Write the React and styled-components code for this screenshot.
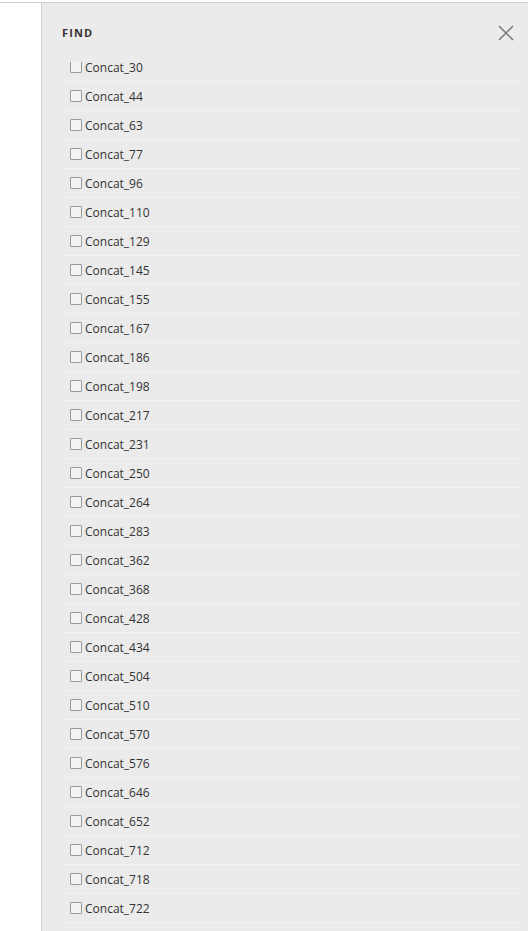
import React, { useEffect, useRef } from "react";
import styled, { createGlobalStyle } from "styled-components";

const GlobalStyle = createGlobalStyle`
  html, body {
    margin: 0;
    padding: 0;
    height: 100%;
    background: #fff;
    font-family: "Open Sans", "Liberation Sans", sans-serif;
  }
  #root {
    height: 100%;
  }
`;

const Page = styled.div`
  height: 100vh;
  box-sizing: border-box;
  padding-top: 2px;
  display: flex;
  flex-direction: column;
`;

const Frame = styled.div`
  flex: 1;
  min-height: 0;
  display: flex;
  border-top: 1px solid #cfcfcf;
`;

const Gutter = styled.div`
  width: 41px;
  flex-shrink: 0;
  background: #fff;
  border-right: 1px solid #cfcfcf;
`;

const Panel = styled.aside`
  flex: 1;
  min-width: 0;
  background: #ebebeb;
  display: flex;
  flex-direction: column;
`;

const Header = styled.div`
  height: 59px;
  flex-shrink: 0;
  display: flex;
  align-items: center;
  justify-content: space-between;
  padding: 0 14px 0 20px;
`;

const Title = styled.h2`
  margin: 0;
  font-size: 11px;
  font-weight: 700;
  letter-spacing: 1.1px;
  color: #333;
`;

const CloseButton = styled.button`
  width: 16px;
  height: 16px;
  padding: 0;
  border: none;
  background: none;
  cursor: pointer;
  display: flex;
`;

const List = styled.ul`
  flex: 1;
  min-height: 0;
  overflow: hidden;
  list-style: none;
  margin: 0 6px 0 20px;
  padding: 0 0 40px;
`;

const Row = styled.li`
  height: 28px;
  display: flex;
  align-items: center;
  gap: 3px;
  padding-left: 8px;
  border-bottom: 1px solid #f3f3f3;
  font-size: 12px;
  color: #333;
`;

const Box = styled.span`
  width: 10px;
  height: 10px;
  border: 1px solid #9a9a9a;
  border-radius: 1px;
  background: #f3f3f3;
  flex-shrink: 0;
`;

const items = [
  30, 44, 63, 77, 96, 110, 129, 145, 155, 167, 186, 198, 217, 231, 250,
  264, 283, 362, 368, 428, 434, 504, 510, 570, 576, 646, 652, 712, 718, 722,
];

export default function App() {
  const listRef = useRef(null);

  useEffect(() => {
    if (listRef.current) listRef.current.scrollTop = 9;
  }, []);

  return (
    <Page>
      <GlobalStyle />
      <Frame>
        <Gutter />
        <Panel>
          <Header>
            <Title>FIND</Title>
            <CloseButton aria-label="Close">
              <svg width="16" height="16" viewBox="0 0 16 16">
                <path d="M1 1 L15 15 M15 1 L1 15" stroke="#777" strokeWidth="1.5" fill="none" />
              </svg>
            </CloseButton>
          </Header>
          <List ref={listRef}>
            {items.map((n) => (
              <Row key={n}>
                <Box />
                Concat_{n}
              </Row>
            ))}
          </List>
        </Panel>
      </Frame>
    </Page>
  );
}
